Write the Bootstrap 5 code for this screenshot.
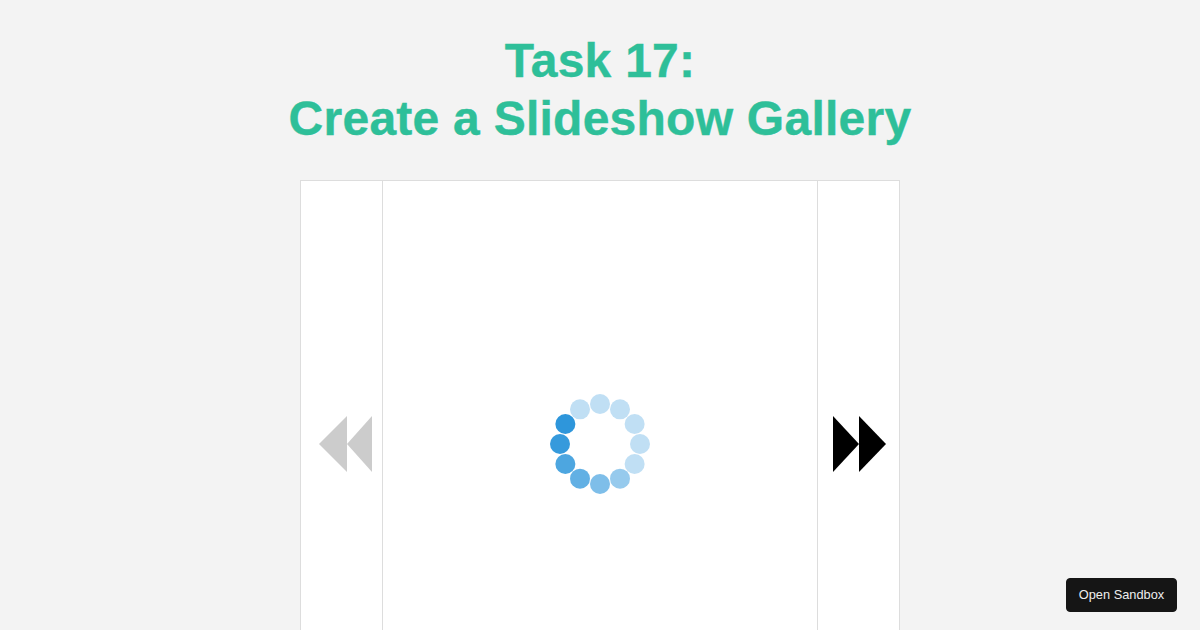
<!DOCTYPE html>
<html lang="en">
<head>
    <meta charset="UTF-8" />
    <meta name="viewport" content="width=device-width, initial-scale=1.0"/>
    <title>Task 17: Create a Slideshow Gallery</title>
    <link href="https://cdn.jsdelivr.net/npm/bootstrap@5.3.0/dist/css/bootstrap.min.css" rel="stylesheet">
    <style>
        html, body {
            height: 630px;
            overflow: hidden;
        }
        body {
            background: #f3f3f3;
            font-family: "Liberation Sans", Arial, sans-serif;
        }
        .task-title {
            color: #2ebf99;
            font-family: "Liberation Sans", Arial, sans-serif;
            font-size: 48px;
            font-weight: 700;
            line-height: 58px;
            letter-spacing: .25px;
            -webkit-text-stroke: .4px #2ebf99;
            margin: 0;
            padding: 32px 0 32px;
        }
        .gallery {
            width: 600px;
            height: 528px;
            background: #fff;
            border: 1px solid #ddd;
        }
        .side-pane {
            width: 81px;
            flex: none;
        }
        .pane-prev {
            padding-left: 18px;
        }
        .pane-next {
            padding-left: 15px;
        }
        .main-pane {
            border-left: 1px solid #ddd;
            border-right: 1px solid #ddd;
        }
        .sandbox-btn {
            right: 23px;
            bottom: 18px;
            width: 111px;
            height: 34px;
            padding: 0;
            background: #151515;
            border-color: #151515;
            color: #eee;
            font-size: 12.8px;
            line-height: 32px;
            border-radius: 4px;
        }
    </style>
</head>
<body>
    <h1 class="task-title text-center">Task 17:<br>Create a Slideshow Gallery</h1>

    <div class="gallery d-flex mx-auto">
        <div class="side-pane pane-prev d-flex align-items-center">
            <svg width="54" height="56" viewBox="0 0 54 56" fill="#ccc">
                <polygon points="0,28 28,0 28,56"/>
                <polygon points="28,28 53,0 53,56"/>
            </svg>
        </div>
        <div class="main-pane flex-grow-1 d-flex align-items-center justify-content-center">
            <svg id="spinner" width="100" height="100" viewBox="-50 -50 100 100"></svg>
        </div>
        <div class="side-pane pane-next d-flex align-items-center">
            <svg width="54" height="56" viewBox="0 0 54 56" fill="#000">
                <polygon points="0,0 26,28 0,56"/>
                <polygon points="26,0 53,28 26,56"/>
            </svg>
        </div>
    </div>

    <a href="#" class="btn sandbox-btn position-fixed">Open Sandbox</a>

    <script>
        // dots start at 12 o'clock and go clockwise
        const opacities = [.3, .3, .3, .3, .3, .5, .62, .75, .85, .96, 1, .3];
        const spinner = document.getElementById('spinner');
        opacities.forEach((op, i) => {
            const a = i * Math.PI / 6;
            const c = document.createElementNS('http://www.w3.org/2000/svg', 'circle');
            c.setAttribute('cx', (40 * Math.sin(a)).toFixed(2));
            c.setAttribute('cy', (-40 * Math.cos(a)).toFixed(2));
            c.setAttribute('r', 10);
            c.setAttribute('fill', '#2e96db');
            c.setAttribute('fill-opacity', op);
            spinner.appendChild(c);
        });
    </script>
</body>
</html>
